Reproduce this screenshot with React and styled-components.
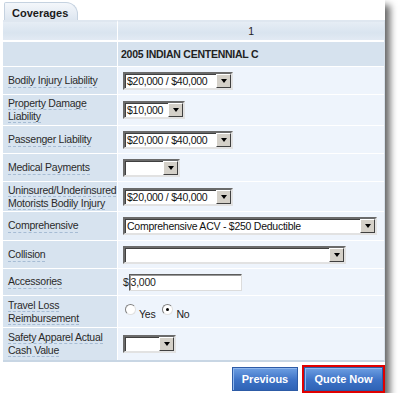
import React from 'react';
import styled, { createGlobalStyle } from 'styled-components';

const Global = createGlobalStyle`
  body {
    margin: 0;
    background: #fff;
    font-family: "Liberation Sans", Arial, sans-serif;
    font-size: 10.5px;
    letter-spacing: -0.25px;
    color: #222;
  }
`;

const Frame = styled.div`
  width: 385px;
  height: 393px;
  background: #fff;
  box-shadow: 5px 5px 7px rgba(0, 0, 0, 0.6);
  display: flex;
  flex-direction: column;
  padding: 2px 0 0 3px;
  box-sizing: border-box;
`;

const Tab = styled.div`
  align-self: flex-start;
  width: 74px;
  height: 20px;
  box-sizing: border-box;
  margin-left: 1px;
  padding: 4px 0 0 7px;
  font-weight: bold;
  font-size: 11px;
  letter-spacing: 0;
  color: #1a1a1a;
  background: linear-gradient(#f4f7fb, #dde6f0);
  border: 1px solid #c5d2e0;
  border-bottom: none;
  border-radius: 2px 12px 0 0;
`;

const Table = styled.div`
  width: 381px;
  display: grid;
  grid-template-columns: 114px 1fr;
  background: #fff;
  border-right: 1px solid #d8e2ec;
  border-bottom: 2px solid #c8d6e4;
`;

const HeadCell = styled.div`
  height: ${p => p.h}px;
  box-sizing: border-box;
  background: ${p => (p.top ? 'linear-gradient(#e6edf5, #d9e4ef 60%, #e2eaf3)' : '#d6e2ee')};
  border-top: 2px solid ${p => (p.top ? '#dfe7f0' : '#fff')};
  border-left: ${p => (p.right ? '1px solid #fff' : 'none')};
  display: flex;
  align-items: center;
  justify-content: ${p => (p.center ? 'center' : 'flex-start')};
  padding-left: ${p => (p.center ? 0 : 3)}px;
  font-weight: ${p => (p.bold ? 'bold' : 'normal')};
`;

const Label = styled.div`
  height: ${p => p.h}px;
  box-sizing: border-box;
  background: #d7e3ef;
  border-top: 1px solid #fff;
  display: flex;
  align-items: center;
  padding: 0 2px 0 5px;
  color: #2a2a2a;
  white-space: nowrap;
`;

const LabelText = styled.span`
  border-bottom: 1px dashed #a6bcd4;
  line-height: 13px;
`;

const Field = styled.div`
  height: ${p => p.h}px;
  box-sizing: border-box;
  background: #eef4fc;
  border-top: 1px solid #fff;
  border-left: 1px solid #fff;
  display: flex;
  align-items: center;
  padding-left: 5px;
`;

const Select = styled.div`
  width: ${p => p.w}px;
  height: 18px;
  box-sizing: border-box;
  background: #fff;
  border: 2px solid;
  border-color: #6b6b6b #e2e2e2 #e2e2e2 #6b6b6b;
  box-shadow: inset 1px 1px 0 #404040;
  display: flex;
  align-items: center;
  justify-content: space-between;
  padding-left: 2px;
  color: #111;
  white-space: nowrap;
`;

const Arrow = styled.div`
  width: 15px;
  height: 14px;
  flex-shrink: 0;
  box-sizing: border-box;
  background: #d4d0c8;
  border: 1px solid;
  border-color: #fff #404040 #404040 #fff;
  display: flex;
  align-items: center;
  justify-content: center;
  &::after {
    content: '';
    border-left: 3.5px solid transparent;
    border-right: 3.5px solid transparent;
    border-top: 4px solid #000;
  }
`;

const Dollar = styled.span`
  align-self: flex-end;
  margin-bottom: 7px;
`;

const Input = styled.div`
  width: 113px;
  height: 17px;
  box-sizing: border-box;
  background: #fff;
  border: 1px solid;
  border-color: #5c5c5c #dcdcdc #dcdcdc #5c5c5c;
  box-shadow: inset 1px 1px 0 #999;
  padding: 1px 0 0 1px;
`;

const Radios = styled.div`
  display: flex;
  align-items: center;
  gap: 3px;
  padding-left: 2px;
`;

const Radio = styled.span`
  width: 11px;
  height: 11px;
  box-sizing: border-box;
  border-radius: 50%;
  background: #fff;
  border: 1px solid;
  border-color: #808080 #e0e0e0 #e0e0e0 #808080;
  display: inline-flex;
  align-items: center;
  justify-content: center;
  margin-top: -4px;
  &::after {
    content: '';
    width: 3px;
    height: 3px;
    border-radius: 50%;
    background: ${p => (p.checked ? '#000' : 'transparent')};
  }
`;

const RadioText = styled.span`
  margin-right: 4px;
  margin-top: 4px;
`;

const Buttons = styled.div`
  display: flex;
  justify-content: flex-end;
  align-items: center;
  gap: 4px;
  width: 382px;
  margin-top: 3px;
`;

const Btn = styled.button`
  height: 24px;
  width: ${p => p.w}px;
  padding: 0;
  font-family: "Liberation Sans", Arial, sans-serif;
  font-size: 11px;
  font-weight: bold;
  color: #fff;
  background: linear-gradient(#6d9fe2, #3d72c6 55%, #2f63b6);
  border: 1px solid #2d5ba6;
  box-shadow: inset 1px 1px 0 #8fb7ee;
  cursor: pointer;
`;

const Focus = styled.div`
  border: 2px solid #e00000;
  display: flex;
`;

const rows = [
  { label: 'Bodily Injury Liability', h: 28, type: 'select', w: 110, value: '$20,000 / $40,000' },
  { label: ['Property Damage', 'Liability'], h: 31, type: 'select', w: 62, value: '$10,000' },
  { label: 'Passenger Liability', h: 28, type: 'select', w: 110, value: '$20,000 / $40,000' },
  { label: 'Medical Payments', h: 28, type: 'select', w: 57, value: '' },
  { label: ['Uninsured/Underinsured', 'Motorists Bodily Injury'], h: 30, type: 'select', w: 110, value: '$20,000 / $40,000' },
  { label: 'Comprehensive', h: 29, type: 'select', w: 254, value: 'Comprehensive ACV - $250 Deductible' },
  { label: 'Collision', h: 28, type: 'select', w: 223, value: '' },
  { label: 'Accessories', h: 27, type: 'input', value: '3,000' },
  { label: ['Travel Loss', 'Reimbursement'], h: 32, type: 'radio' },
  { label: ['Safety Apparel Actual', 'Cash Value'], h: 33, type: 'select', w: 53, value: '' },
];

const renderLabel = label =>
  Array.isArray(label) ? (
    <div>
      {label.map(l => (
        <div key={l}>
          <LabelText>{l}</LabelText>
        </div>
      ))}
    </div>
  ) : (
    <LabelText>{label}</LabelText>
  );

const renderField = row => {
  if (row.type === 'input') {
    return (
      <>
        <Dollar>$</Dollar>
        <Input>{row.value}</Input>
      </>
    );
  }
  if (row.type === 'radio') {
    return (
      <Radios>
        <Radio />
        <RadioText>Yes</RadioText>
        <Radio checked />
        <RadioText>No</RadioText>
      </Radios>
    );
  }
  return (
    <Select w={row.w}>
      <span>{row.value}</span>
      <Arrow />
    </Select>
  );
};

const App = () => (
  <>
    <Global />
    <Frame>
      <Tab>Coverages</Tab>
      <Table>
        <HeadCell h={20} top />
        <HeadCell h={20} top right center>1</HeadCell>
        <HeadCell h={26} />
        <HeadCell h={26} right bold>2005 INDIAN CENTENNIAL C</HeadCell>
        {rows.map((row, i) => (
          <React.Fragment key={i}>
            <Label h={row.h}>{renderLabel(row.label)}</Label>
            <Field h={row.h}>{renderField(row)}</Field>
          </React.Fragment>
        ))}
      </Table>
      <Buttons>
        <Btn w={66}>Previous</Btn>
        <Focus>
          <Btn w={79}>Quote Now</Btn>
        </Focus>
      </Buttons>
    </Frame>
  </>
);

export default App;
